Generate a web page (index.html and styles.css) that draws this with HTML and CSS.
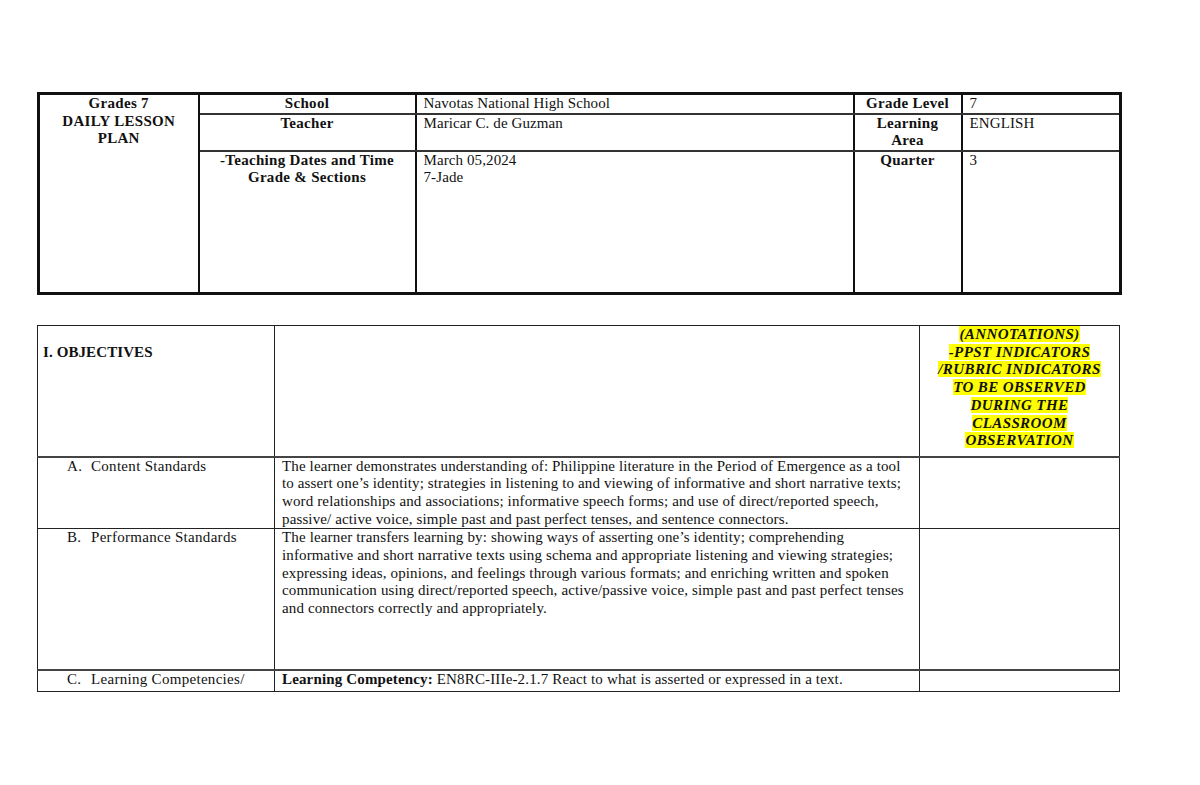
FILE: index.html
```html
<!DOCTYPE html>
<html>
<head>
<meta charset="utf-8">
<link rel="stylesheet" href="styles.css">
</head>
<body>
<div class="page">
  <table class="head">
    <colgroup>
      <col class="c1"><col class="c2"><col class="c3"><col class="c4"><col class="c5">
    </colgroup>
    <tr class="r1">
      <td rowspan="3" class="title">Grades 7<br>DAILY LESSON<br>PLAN</td>
      <td class="lbl">School</td>
      <td class="val">Navotas National High School</td>
      <td class="lbl">Grade Level</td>
      <td class="val">7</td>
    </tr>
    <tr class="r2">
      <td class="lbl">Teacher</td>
      <td class="val">Maricar C. de Guzman</td>
      <td class="lbl">Learning<br>Area</td>
      <td class="val">ENGLISH</td>
    </tr>
    <tr class="r3">
      <td class="lbl">-Teaching Dates and Time<br>Grade &amp; Sections</td>
      <td class="val">March 05,2024<br>7-Jade</td>
      <td class="lbl">Quarter</td>
      <td class="val">3</td>
    </tr>
  </table>

  <table class="plan">
    <colgroup>
      <col class="p1"><col class="p2"><col class="p3">
    </colgroup>
    <tr class="q1">
      <td class="obj">I. OBJECTIVES</td>
      <td></td>
      <td class="anno"><span class="hl">(ANNOTATIONS)<br>-PPST INDICATORS<br>/RUBRIC INDICATORS<br>TO BE OBSERVED<br>DURING THE<br>CLASSROOM<br>OBSERVATION</span></td>
    </tr>
    <tr class="q2">
      <td class="item"><span class="mark">A.</span>Content Standards</td>
      <td class="txt">
        <span class="ln">The learner demonstrates understanding of: Philippine literature in the Period of Emergence as a tool</span>
        <span class="ln">to assert one’s identity; strategies in listening to and viewing of informative and short narrative texts;</span>
        <span class="ln">word relationships and associations; informative speech forms; and use of direct/reported speech,</span>
        <span class="ln">passive/ active voice, simple past and past perfect tenses, and sentence connectors.</span>
      </td>
      <td></td>
    </tr>
    <tr class="q3">
      <td class="item"><span class="mark">B.</span>Performance Standards</td>
      <td class="txt">
        <span class="ln wide">The learner transfers learning by: showing ways of asserting one’s identity; comprehending</span>
        <span class="ln">informative and short narrative texts using schema and appropriate listening and viewing strategies;</span>
        <span class="ln">expressing ideas, opinions, and feelings through various formats; and enriching written and spoken</span>
        <span class="ln">communication using direct/reported speech, active/passive voice, simple past and past perfect tenses</span>
        <span class="ln">and connectors correctly and appropriately.</span>
      </td>
      <td></td>
    </tr>
    <tr class="q4">
      <td class="item"><span class="mark">C.</span>Learning Competencies/</td>
      <td class="txt comp"><b>Learning Competency:</b> EN8RC-IIIe-2.1.7 React to what is asserted or expressed in a text.</td>
      <td></td>
    </tr>
  </table>
</div>
</body>
</html>
```

FILE: styles.css
```css
html, body {
  margin: 0;
  padding: 0;
  background: #ffffff;
}
body {
  font-family: "Liberation Serif", "Times New Roman", serif;
  font-size: 15px;
  line-height: 17.7px;
  letter-spacing: 0.1px;
  color: #111;
}
.page {
  width: 1200px;
  height: 785px;
  padding-top: 92px;
  padding-left: 37px;
  box-sizing: border-box;
}
table {
  border-collapse: collapse;
  table-layout: fixed;
}
td {
  vertical-align: top;
  padding: 0 7px;
}
.head {
  width: 1082px;
  border: 3px solid #111;
  line-height: 17.5px;
}
.head td {
  border: 2px solid #111;
}
.head tr.r1 td, .head tr.r2 td {
  border-bottom: 2px solid #333;
}
.c1 { width: 160px; }
.c2 { width: 217px; }
.c3 { width: 438px; }
.c4 { width: 108px; }
.c5 { width: 159px; }
.r1 { height: 17px; }
.r2 { height: 35px; }
.r3 { height: 143px; }
.title, .lbl {
  font-weight: bold;
  text-align: center;
  letter-spacing: 0.3px;
}
.lbl {
  padding: 0 3px;
}
.val {
  padding-left: 7px;
}

.plan {
  width: 1082px;
  margin-top: 30px;
  border: 1px solid #222;
}
.plan td {
  border: 1px solid #222;
}
.plan tr.q1 td { border-bottom: 2px solid #444; }
.plan tr.q3 td { border-bottom: 2px solid #444; }
.p1 { width: 237px; }
.p2 { width: 645px; }
.p3 { width: 200px; }
.q1 { height: 131px; }
.q2 { height: 71px; }
.q3 { height: 141px; }
.q4 { height: 22px; }
.plan td.txt {
  padding: 0 2px 0 7px;
  letter-spacing: 0.13px;
}
.ln {
  display: block;
  white-space: nowrap;
}
.ln.wide {
  letter-spacing: 0.15px;
}
.plan td.comp {
  letter-spacing: 0.15px;
}
.obj {
  font-weight: bold;
  padding: 18px 5px 0 5px;
}
.anno {
  text-align: center;
  font-weight: bold;
  font-style: italic;
  letter-spacing: 0.4px;
  padding: 0 2px;
}
.hl {
  background: #ffff00;
}
.item {
  padding-left: 29px;
  letter-spacing: 0.3px;
}
.mark {
  display: inline-block;
  width: 24px;
}
```
